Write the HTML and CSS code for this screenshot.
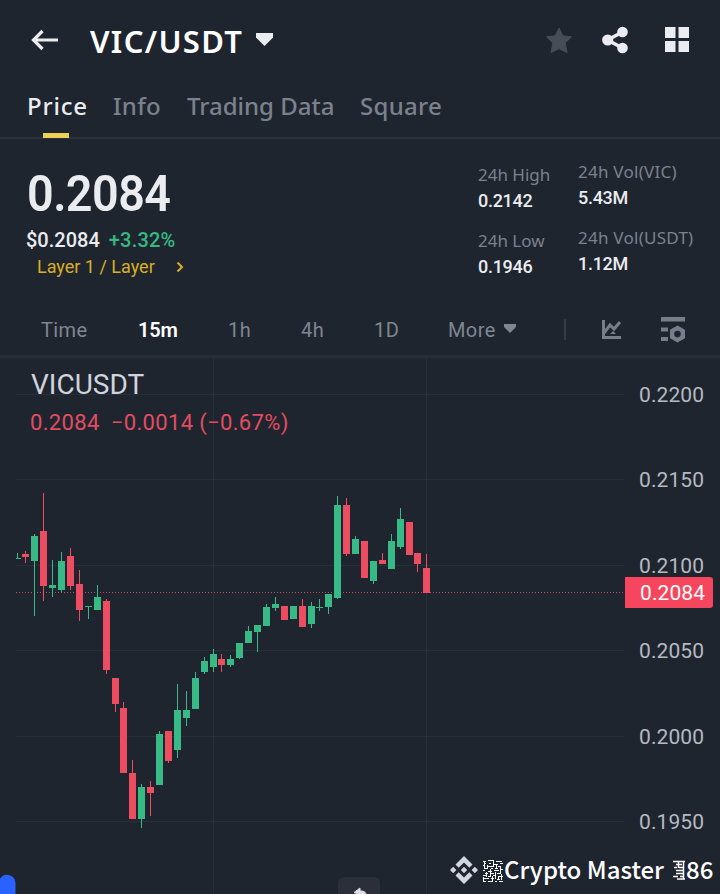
FILE: index.html
```html
<!DOCTYPE html>
<html lang="en">
<head>
<meta charset="utf-8">
<title>VIC/USDT</title>
<link rel="stylesheet" href="styles.css">
</head>
<body>
<header class="topbar">
  <svg class="back" width="28" height="22" viewBox="0 0 28 22"><path d="M27 11H3M11.500 2L2.500 11l9 9" fill="none" stroke="#eaecef" stroke-width="3.200"/></svg>
  <h1 class="pair">VIC/USDT</h1>
  <svg class="caret" width="17" height="13" viewBox="0 0 17 13"><path d="M0 0h17v4.500L8.500 13 0 4.500z" fill="#eaecef"/></svg>
  <div class="actions">
    <svg width="28" height="28" viewBox="0 0 28 28"><path d="M14 2l3.800 7.800 8.700 1-6.300 6.200 1.800 9.500-8-3.800-8 3.800L7.800 17 1.500 10.800l8.700-1z" fill="#474d57" stroke="#474d57" stroke-linejoin="round"/></svg>
    <svg width="28" height="28" viewBox="0 0 28 28"><path d="M21.500 6L6.500 14l15 8" fill="none" stroke="#eaecf2" stroke-width="3.600"/><g fill="#eaecf2"><circle cx="21.500" cy="6" r="5.300"/><circle cx="6.700" cy="14" r="5.600"/><circle cx="21.500" cy="22" r="5.300"/></g></svg>
    <svg width="24" height="25" viewBox="0 0 24 25"><path d="M0 0h10.500v11H0zM13.500 0H24v11H13.500zM0 14h10.500v11H0zM13.500 14H24v11H13.500z" fill="#eaecf2"/></svg>
  </div>
</header>
<nav class="tabs">
  <span class="tab tab-on">Price</span>
  <span class="tab tab-info">Info</span>
  <span class="tab tab-data">Trading Data</span>
  <span class="tab">Square</span>
</nav>
<section class="summary">
  <div class="quote">
    <div class="last">0.2084</div>
    <div class="change"><span class="usd">$0.2084</span><span class="up">+3.32%</span></div>
    <div class="layer"><span>Layer 1 / Layer</span><svg width="8" height="12" viewBox="0 0 8 12"><path d="M1.500 1.500L6 6l-4.500 4.500" fill="none" stroke="#d8ae25" stroke-width="2"/></svg></div>
  </div>
  <div class="stats stats-left">
    <div class="stat"><span class="label">24h High</span><span class="value">0.2142</span></div>
    <div class="stat"><span class="label">24h Low</span><span class="value">0.1946</span></div>
  </div>
  <div class="stats stats-right">
    <div class="stat"><span class="label">24h Vol(VIC)</span><span class="value">5.43M</span></div>
    <div class="stat"><span class="label">24h Vol(USDT)</span><span class="value">1.12M</span></div>
  </div>
</section>
<nav class="intervals">
  <span class="i-time">Time</span>
  <span class="i-15m">15m</span>
  <span class="i-1h">1h</span>
  <span class="i-4h">4h</span>
  <span class="i-1d">1D</span>
  <span class="i-more">More</span>
  <svg class="more-caret" width="12" height="9" viewBox="0 0 12 9"><path d="M0 0h12v3L6 9 0 3z" fill="#7f8692"/></svg>
  <i class="divider"></i>
  <svg class="i-draw" width="20" height="20" viewBox="0 0 20 20"><path d="M1.500 0v17.500H19M2 13l6-8 4 4 6-7" fill="none" stroke="#777e8a" stroke-width="3"/><path d="M8 14l3-3 3 3z" fill="#777e8a"/></svg>
  <svg class="i-settings" width="26" height="26" viewBox="0 0 26 26"><path d="M1 0h24v4.500H1zM1 10.500h7v4H1zM1 20h7v4H1z" fill="#777e8a"/><path d="M17.500 8.500l7.500 4.300v8.500l-7.500 4.300-7.500-4.300v-8.500zM17.500 13.800a3.300 3.300 0 100 6.600 3.300 3.300 0 000-6.600z" fill="#777e8a" fill-rule="evenodd"/></svg>
</nav>
<main class="chart">
  <svg class="plot" width="720" height="538" viewBox="0 356 720 538">
    <path d="M16 394.500h608M16 479.500h608M16 565.500h608M16 650.500h608M16 736.500h608M16 821.500h608M213.500 358v536M426.500 358v536" stroke="#282f39"/>
    <path d="M16 592.500h609" stroke="#b8505f" stroke-dasharray="1 2"/>
    <g id="candles"></g>
    <path d="M625 577h85a3 3 0 013 3v25a3 3 0 01-3 3h-85z" fill="#f6465d"/>
    <g class="axis">
      <text x="639" y="402" textLength="65">0.2200</text>
      <text x="639" y="487" textLength="65">0.2150</text>
      <text x="639" y="573" textLength="65">0.2100</text>
      <text x="639" y="658" textLength="65">0.2050</text>
      <text x="639" y="744" textLength="65">0.2000</text>
      <text x="639" y="829" textLength="65">0.1950</text>
      <text class="mark" x="640" y="600" textLength="65">0.2084</text>
    </g>
    <path d="M0 878.500a8.500 8.500 0 0115.500 5v11H0z" fill="#2962ff"/>
    <path d="M338 894v-11a6 6 0 016-6h30a6 6 0 016 6v11z" fill="#2a2f39"/>
    <path d="M354 892.500l6-4.500v3h2q3 0 4 3h-8z" fill="#dcdfe6" stroke="#dcdfe6"/>
  </svg>
  <div class="legend">
    <div class="symbol">VICUSDT</div>
    <div class="delta"><span>0.2084</span><span>−0.0014 (−0.67%)</span></div>
  </div>
  <div class="credit">
    <svg class="logo" width="28" height="28" viewBox="0 0 28 28"><g fill="#d3d6df"><path d="M14 0l8.500 8.500-3.200 3.200L14 6.400l-5.300 5.300-3.200-3.200zM14 28l8.500-8.500-3.200-3.200-5.300 5.300-5.300-5.300-3.200 3.200zM14 10.800l3.200 3.200-3.200 3.200-3.200-3.200zM3.200 10.800L6.400 14l-3.200 3.200L0 14zM24.800 10.800L28 14l-3.200 3.200-3.200-3.200z"/></g></svg>
    <svg class="noise" width="20" height="23" viewBox="0 0 20 23"><path d="M0 1.500h3M5 .5h6M13 1.500h6M1 3.500h2M6 3.500h2M11 4.500h4M17 3.500h3M0 5.500h2M5 6.500h5M15 6.500h2M1 8.500h4M8 8.500h2M12 8.500h3M18 9.500h2M0 10.500h2M5 11.500h4M11 10.500h5M2 13.500h3M8 13.500h3M14 13.500h4M0 15.500h3M5 16.500h2M10 15.500h3M16 16.500h4M1 18.500h5M8 18.500h3M14 19.500h3M0 21.500h3M5 21.500h5M12 21.500h2M16 21.500h4" stroke="#fff" stroke-width="1.200"/><path d="M1.500 2v6M4.500 5v4M10.500 1v6M13.500 4v4M17.500 6v7M3.500 12v5M7.500 9v8M12.500 12v7M9.500 16v5M18.500 14v6M.5 17v5M15.500 16v4" stroke="#fff"/></svg>
    <span class="author name">Crypto Master</span>
    <svg class="glitch" width="12" height="20" viewBox="0 0 12 20"><path d="M0 1.500h12M3 4.500h6M1 7.500h3M6 7.500h5M3 10.500h8M3 13.500h8M0 16.500h5M7 16.500h4M4 19h8M10.500 1v18M5.500 1v7" fill="none" stroke="#fff" stroke-width="1.500"/></svg>
    <span class="author">86</span>
  </div>
</main>
<script src="chart.js"></script>
</body>
</html>
```
FILE: styles.css
```css
* { box-sizing: border-box; }
body { margin: 0; width: 720px; height: 894px; overflow: hidden; background: #1f252f; color: #eaecef; font-family: "Noto Sans", sans-serif; }
svg { display: block; flex: none; }
span, .last, .symbol { white-space: nowrap; }

.topbar { display: flex; align-items: center; height: 79px; padding: 0 31px 0 31px; }
.pair { margin: 2px 0 0 31px; width: 154px; font-size: 31px; line-height: 40px; font-weight: 600; color: #fff; letter-spacing: 1.3px; }
.caret { margin-left: 12px; }
.actions { display: flex; align-items: center; gap: 28px; margin-left: auto; }
.actions svg:last-child { margin-left: 8px; }

.tabs { display: flex; height: 60px; padding-left: 27px; border-bottom: 2px solid #2b313b; font-size: 24px; line-height: 54px; font-weight: 500; color: #7b818d; letter-spacing: .3px; }
.tab { flex: none; }
.tab-on { position: relative; width: 86px; color: #eaecef; letter-spacing: .8px; }
.tab-on::after { content: ""; position: absolute; left: 16px; top: 54px; width: 26px; height: 5px; background: #efd057; }
.tab-info { width: 74px; }
.tab-data { width: 173px; letter-spacing: 0; }

.summary { display: flex; height: 165px; padding-left: 27px; }
.quote { width: 451px; padding-top: 25px; font-family: Roboto, sans-serif; }
.last { font-size: 50px; line-height: 60px; font-weight: 600; transform: scaleX(.935); transform-origin: 0 50%; letter-spacing: -.6px; }
.change { display: flex; gap: 9px; height: 32px; margin-left: -1px; font-size: 20px; line-height: 32px; font-weight: 500; }
.up { color: #35b981; letter-spacing: .2px; }
.layer { display: flex; align-items: center; gap: 21px; padding-left: 10px; font-size: 18px; line-height: 22px; color: #d8ae25; }
.stats { display: flex; flex-direction: column; gap: 14px; }
.stats-left { width: 100px; padding-top: 23px; }
.stats-right { padding-top: 20px; }
.stat { display: flex; flex-direction: column; height: 52px; }
.label { font-size: 17px; line-height: 26px; color: #7b818d; }
.stats-right .label { letter-spacing: .25px; }
.value { font: 500 18px/26px Roboto, sans-serif; letter-spacing: -.3px; }

.intervals { display: flex; align-items: center; height: 54px; border-bottom: 3px solid #272d37; padding-left: 41px; font: 20px/24px Roboto, sans-serif; color: #7f8692; letter-spacing: .4px; }
.intervals > * { flex: none; }
.i-time { width: 97px; }
.i-15m { width: 90px; color: #fff; font-weight: 600; letter-spacing: -.2px; }
.i-1h { width: 73px; }
.i-4h { width: 73px; }
.i-1d { width: 74px; }
.i-more { width: 56px; }
.more-caret { margin-top: -3px; }
.divider { width: 2px; height: 21px; margin-left: 48px; background: #363c46; }
.i-draw { margin-left: 36px; }
.i-settings { margin-left: 38px; }

.chart { position: relative; height: 536px; font-family: Roboto, sans-serif; }
.plot { position: absolute; left: 0; top: -2px; }
.axis { font-size: 21px; fill: #b5b9c2; }
.mark { fill: #fff; }
.legend { position: absolute; left: 31px; top: 10px; }
.symbol { font-size: 28px; line-height: 34px; color: #d1d4dc; }
.delta { display: flex; gap: 11px; margin: 8px 0 0 -1px; font-size: 22px; line-height: 26px; color: #e34c60; letter-spacing: .35px; }
.credit { position: absolute; left: 450px; top: 498px; display: flex; align-items: center; height: 28px; }
.noise { margin: 3px 1px 0 5px; }
.author { margin-top: -2px; font: 500 24px/28px "Noto Sans CJK SC", sans-serif; color: #fff; }
.name { width: 163px; }
.glitch { margin: 0 1px 0 6px; }
```
FILE: chart.js
```js
// Each candle: left edge, wick top, body top, body bottom, wick bottom, direction.
const candles = [
  [14, 553, 558, 559, 559, 1], [22, 551, 554, 557, 563, 0], [31, 534, 536, 561, 616, 1],
  [40, 493, 531, 586, 601, 0], [49, 560, 585, 588, 597, 1], [58, 552, 561, 590, 592, 1],
  [67, 548, 556, 586, 590, 0], [76, 570, 584, 610, 621, 0], [85, 606, 606, 607, 619, 1],
  [94, 585, 597, 610, 610, 1], [103, 599, 601, 670, 674, 0], [112, 678, 678, 704, 712, 0],
  [120, 702, 708, 773, 773, 0], [129, 760, 773, 819, 819, 0], [138, 784, 787, 819, 828, 1],
  [147, 781, 787, 793, 816, 0], [156, 731, 734, 785, 785, 1], [165, 731, 731, 761, 763, 0],
  [174, 684, 710, 750, 758, 1], [183, 691, 710, 718, 726, 1], [192, 672, 678, 709, 709, 1],
  [201, 657, 661, 672, 674, 1], [210, 649, 654, 667, 672, 1], [218, 654, 659, 665, 672, 0],
  [227, 655, 659, 665, 667, 1], [236, 643, 643, 658, 659, 1], [245, 626, 631, 643, 643, 1],
  [254, 625, 625, 632, 652, 1], [263, 604, 607, 626, 626, 1], [272, 597, 604, 608, 611, 1],
  [281, 606, 606, 620, 620, 0], [290, 606, 606, 619, 619, 1], [299, 599, 606, 627, 627, 0],
  [308, 602, 606, 624, 628, 1], [316, 599, 607, 608, 611, 1], [325, 594, 594, 607, 614, 1],
  [334, 496, 505, 598, 599, 1], [343, 498, 505, 554, 556, 0], [352, 536, 539, 554, 554, 1],
  [361, 541, 541, 578, 578, 0], [370, 561, 561, 581, 584, 1], [379, 553, 560, 564, 564, 0],
  [388, 534, 541, 569, 569, 1], [397, 508, 519, 547, 549, 1], [406, 522, 522, 555, 555, 0],
  [414, 553, 553, 564, 572, 0], [423, 554, 568, 593, 593, 0]
];
document.getElementById('candles').innerHTML = candles.map(([x, high, top, bottom, low, up]) => {
  const left = Math.max(x, 16);
  return `<path fill="${up ? '#38ba86' : '#ee4c61'}" d="M${left} ${top}H${x + 7}V${bottom}H${left}zM${x + 3} ${high}h1V${low}h-1z"/>`;
}).join('');
```
